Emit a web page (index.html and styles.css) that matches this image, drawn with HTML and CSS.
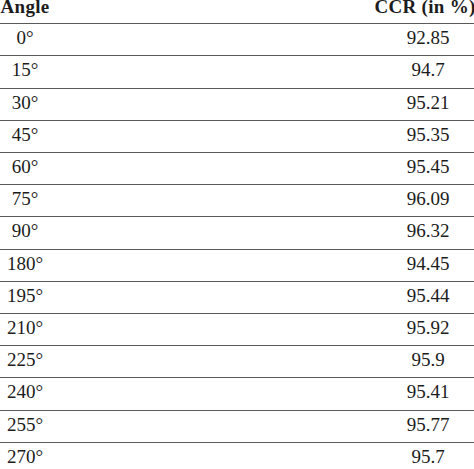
FILE: index.html
```html
<!DOCTYPE html>
<html>
<head>
<meta charset="utf-8">
<link rel="stylesheet" href="styles.css">
</head>
<body>
<div class="table">
  <div class="row head"><div class="c1">Angle</div><div></div><div class="c3">CCR (in %)</div></div>
  <div class="row"><div class="c1">0°</div><div></div><div class="c3">92.85</div></div>
  <div class="row"><div class="c1">15°</div><div></div><div class="c3">94.7</div></div>
  <div class="row"><div class="c1">30°</div><div></div><div class="c3">95.21</div></div>
  <div class="row"><div class="c1">45°</div><div></div><div class="c3">95.35</div></div>
  <div class="row"><div class="c1">60°</div><div></div><div class="c3">95.45</div></div>
  <div class="row"><div class="c1">75°</div><div></div><div class="c3">96.09</div></div>
  <div class="row"><div class="c1">90°</div><div></div><div class="c3">96.32</div></div>
  <div class="row"><div class="c1">180°</div><div></div><div class="c3">94.45</div></div>
  <div class="row"><div class="c1">195°</div><div></div><div class="c3">95.44</div></div>
  <div class="row"><div class="c1">210°</div><div></div><div class="c3">95.92</div></div>
  <div class="row"><div class="c1">225°</div><div></div><div class="c3">95.9</div></div>
  <div class="row"><div class="c1">240°</div><div></div><div class="c3">95.41</div></div>
  <div class="row"><div class="c1">255°</div><div></div><div class="c3">95.77</div></div>
  <div class="row"><div class="c1">270°</div><div></div><div class="c3">95.7</div></div>
</div>
</body>
</html>
```

FILE: styles.css
```css
html, body {
  margin: 0;
  padding: 0;
  background: #ffffff;
  overflow: hidden;
}
body {
  width: 474px;
  height: 469px;
}
.table {
  width: 478px;
  font-family: "Liberation Serif", "Times New Roman", serif;
  font-size: 19px;
  color: #1c1c1c;
}
.row {
  display: grid;
  grid-template-columns: 50px 1fr 100px;
  box-sizing: border-box;
  height: 32.2px;
  border-top: 1.5px solid #5a5a5a;
  line-height: 28px;
  white-space: nowrap;
}
.row.head {
  height: 23.3px;
  border-top: none;
  line-height: 14px;
  font-weight: bold;
  letter-spacing: 0.3px;
}
.c1, .c3 {
  text-align: center;
}
.head .c3 {
  margin-left: -6px;
}
```
